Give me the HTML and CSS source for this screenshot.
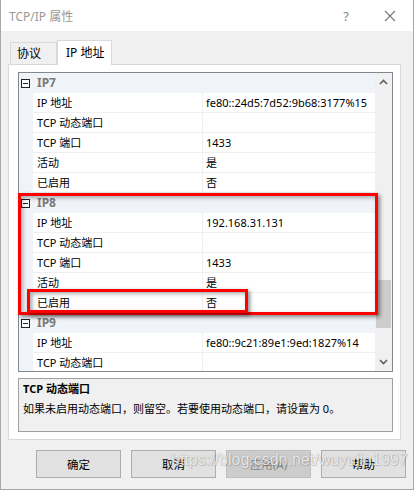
FILE: index.html
```html
<!DOCTYPE html>
<html lang="zh-CN">
<head>
    <meta charset="UTF-8">
    <title>TCP/IP 属性</title>
    <link rel="stylesheet" href="styles.css">
</head>
<body>
    <div class="window">
        <div class="titlebar">
            <span class="title">TCP/IP 属性</span>
            <span class="help">?</span>
            <svg class="close" width="12" height="12" viewBox="0 0 12 12">
                <path d="M1 1L11 11M11 1L1 11" stroke="#777" stroke-width="1.1" fill="none"/>
            </svg>
        </div>

        <div class="content">
            <div class="tabs">
                <div class="tab">协议</div>
                <div class="tab active">IP 地址</div>
            </div>

            <div class="panel">
                <div class="grid">
                    <div class="rows">
                        <!-- IP7 -->
                        <div class="row category"><span class="toggle"></span><span class="cat-name">IP7</span></div>
                        <div class="row"><span class="gutter"></span><span class="label">IP 地址</span><span class="value">fe80::24d5:7d52:9b68:3177%15</span></div>
                        <div class="row"><span class="gutter"></span><span class="label">TCP 动态端口</span><span class="value"></span></div>
                        <div class="row"><span class="gutter"></span><span class="label">TCP 端口</span><span class="value">1433</span></div>
                        <div class="row"><span class="gutter"></span><span class="label">活动</span><span class="value">是</span></div>
                        <div class="row"><span class="gutter"></span><span class="label">已启用</span><span class="value">否</span></div>
                        <!-- IP8 -->
                        <div class="row category"><span class="toggle"></span><span class="cat-name">IP8</span></div>
                        <div class="row"><span class="gutter"></span><span class="label">IP 地址</span><span class="value">192.168.31.131</span></div>
                        <div class="row"><span class="gutter"></span><span class="label">TCP 动态端口</span><span class="value"></span></div>
                        <div class="row"><span class="gutter"></span><span class="label">TCP 端口</span><span class="value">1433</span></div>
                        <div class="row"><span class="gutter"></span><span class="label">活动</span><span class="value">是</span></div>
                        <div class="row"><span class="gutter"></span><span class="label">已启用</span><span class="value">否</span></div>
                        <!-- IP9 -->
                        <div class="row category"><span class="toggle"></span><span class="cat-name">IP9</span></div>
                        <div class="row"><span class="gutter"></span><span class="label">IP 地址</span><span class="value">fe80::9c21:89e1:9ed:1827%14</span></div>
                        <div class="row"><span class="gutter"></span><span class="label">TCP 动态端口</span><span class="value"></span></div>
                    </div>
                    <div class="scrollbar">
                        <svg class="arrow" width="9" height="6" viewBox="0 0 9 6">
                            <path d="M1 5L4.5 1.5L8 5" stroke="#606060" stroke-width="1.6" fill="none"/>
                        </svg>
                        <div class="track"><div class="thumb"></div></div>
                        <svg class="arrow" width="9" height="6" viewBox="0 0 9 6">
                            <path d="M1 1L4.5 4.5L8 1" stroke="#606060" stroke-width="1.6" fill="none"/>
                        </svg>
                    </div>
                </div>

                <div class="desc">
                    <div class="desc-title">TCP 动态端口</div>
                    <div class="desc-text">如果未启用动态端口，则留空。若要使用动态端口，请设置为 0。</div>
                </div>
            </div>

            <div class="buttons">
                <button class="btn">确定</button>
                <button class="btn">取消</button>
                <button class="btn disabled">应用(A)</button>
                <button class="btn">帮助</button>
            </div>
        </div>

        <!-- highlight frames drawn on top -->
        <div class="mark mark-group"></div>
        <div class="mark mark-row"></div>
        <div class="watermark">https://blog.csdn.net/wuyujin1997</div>
    </div>
</body>
</html>
```

FILE: styles.css
```css
body {
    margin: 0;
    font-family: "Noto Sans", "Noto Sans CJK SC", sans-serif;
    font-size: 11px;
    color: #000;
    background: #f0f0f0;
}
.window {
    position: relative;
    width: 412px;
    height: 489px;
    background: #f0f0f0;
    border-left: 1px solid #a8a8a8;
    border-right: 1px solid #a8a8a8;
    border-bottom: 1px solid #a8a8a8;
    overflow: hidden;
}
.titlebar {
    display: flex;
    align-items: center;
    height: 31px;
    background: #fff;
}
.title {
    flex: 1;
    padding-left: 8px;
    color: #999;
    font-size: 12px;
}
.help {
    width: 16px;
    margin-right: 30px;
    color: #888;
    font-size: 13px;
    text-align: center;
}
.close {
    margin-right: 17px;
}
.content {
    padding: 9px 0 0 0;
}
.tabs {
    display: flex;
    align-items: flex-end;
    height: 24px;
    padding-left: 9px;
}
.tab {
    height: 21px;
    line-height: 22px;
    padding: 0 15px 0 6px;
    border: 1px solid #d9d9d9;
    border-bottom: none;
    background: #f0f0f0;
    font-size: 12px;
}
.tab.active {
    height: 24px;
    line-height: 24px;
    padding: 0 7px 0 8px;
    margin-bottom: -1px;
    background: #fff;
    border-left: 1px solid #d9d9d9;
    position: relative;
    z-index: 1;
}
.panel {
    margin-left: 7px;
    width: 393px;
    height: 376px;
    background: #fff;
    border: 1px solid #d9d9d9;
    padding: 7px 0 0 9px;
    box-sizing: border-box;
}
.grid {
    display: flex;
    width: 375px;
    height: 300px;
    border: 1px solid #828790;
    box-sizing: border-box;
}
.rows {
    width: 356px;
    height: 298px;
    overflow: hidden;
}
.row {
    display: flex;
    height: 20px;
    line-height: 20px;
}
.gutter {
    width: 14px;
    background: #f0f3f8;
}
.label {
    width: 170px;
    padding-left: 4px;
    border-bottom: 1px solid #f0f0f0;
    border-right: 1px solid #f0f0f0;
    box-sizing: border-box;
    white-space: nowrap;
}
.value {
    flex: 1;
    padding-left: 3px;
    border-bottom: 1px solid #f0f0f0;
    white-space: nowrap;
}
.category {
    background: #f0f3f8;
    align-items: center;
}
.toggle {
    position: relative;
    width: 7px;
    height: 7px;
    margin: 0 7px 0 2px;
    border: 1px solid #222;
    background: #fff;
}
.toggle::after {
    content: "";
    position: absolute;
    left: 1px;
    top: 3px;
    width: 5px;
    height: 1px;
    background: #222;
}
.cat-name {
    font-weight: bold;
    font-size: 12px;
    color: #7a7a7a;
}
.scrollbar {
    display: flex;
    flex-direction: column;
    align-items: center;
    width: 17px;
    background: #f0f0f0;
}
.arrow {
    margin: 6px 0;
}
.track {
    flex: 1;
    width: 100%;
}
.thumb {
    width: 15px;
    height: 48px;
    margin: 189px auto 0;
    background: #cdcdcd;
}
.desc {
    margin-top: 6px;
    width: 375px;
    height: 54px;
    padding: 2px 4px;
    border: 1px solid #a0a0a0;
    background: #f0f0f0;
    box-sizing: border-box;
}
.desc-title {
    font-weight: bold;
    line-height: 16px;
}
.desc-text {
    margin-top: 4px;
    line-height: 16px;
}
.buttons {
    display: flex;
    justify-content: flex-end;
    gap: 10px;
    padding: 10px 7px 0 0;
}
.btn {
    width: 85px;
    height: 28px;
    font-family: inherit;
    font-size: 11.5px;
    background: #e1e1e1;
    border: 1px solid #adadad;
    color: #000;
    padding: 0;
}
.btn.disabled {
    background: #cccccc;
    border-color: #bfbfbf;
    color: #838383;
}
.mark {
    position: absolute;
    border: 3px solid #ff0000;
    box-shadow: 2px 2px 4px rgba(0, 0, 0, 0.45), inset 2px 2px 4px rgba(0, 0, 0, 0.3);
}
.mark-group {
    left: 17px;
    top: 193px;
    width: 354px;
    height: 116px;
}
.mark-row {
    left: 26px;
    top: 289px;
    width: 215px;
    height: 18px;
}
.watermark {
    position: absolute;
    left: 170px;
    top: 451px;
    font-family: "Liberation Sans", Arial, sans-serif;
    font-size: 16px;
    color: rgba(255, 255, 255, 0.8);
    text-shadow: 0 0 1px rgba(0, 0, 0, 0.3), 1px 1px 1px rgba(0, 0, 0, 0.15);
    white-space: nowrap;
}
```
